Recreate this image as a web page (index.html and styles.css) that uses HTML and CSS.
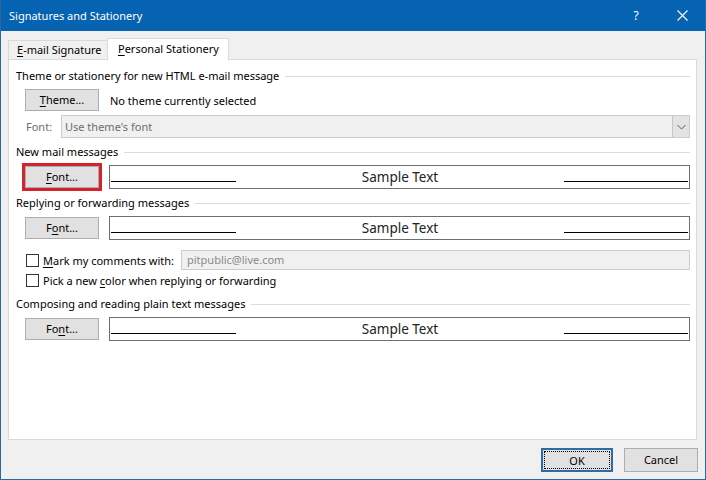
FILE: index.html
```html
<!DOCTYPE html>
<html>
<head>
<meta charset="utf-8">
<title>Signatures and Stationery</title>
<link rel="stylesheet" href="styles.css">
</head>
<body>
<div class="window">
  <div class="titlebar">
    <span class="title">Signatures and Stationery</span>
    <span class="tb-btn">?</span>
    <span class="tb-btn">
      <svg width="11" height="11" viewBox="0 0 11 11"><path d="M0.5 0.5 L10.5 10.5 M10.5 0.5 L0.5 10.5" stroke="#fff" stroke-width="1.1" fill="none"/></svg>
    </span>
  </div>
  <div class="client">
    <div class="tabs">
      <div class="tab"><span class="tab-text"><u>E</u>-mail Signature</span></div>
      <div class="tab active"><span class="tab-text"><u>P</u>ersonal Stationery</span></div>
    </div>
    <div class="panel">
      <div class="group-label"><span>Theme or stationery for new HTML e-mail message</span></div>
      <div class="row theme-row">
        <span class="btn"><span><u>T</u>heme...</span></span>
        <span class="note">No theme currently selected</span>
      </div>
      <div class="row font-row">
        <span class="dis-label">Font:</span>
        <div class="combo">
          <span class="combo-text">Use theme's font</span>
          <span class="combo-btn"><svg width="9" height="6" viewBox="0 0 9 6"><path d="M0.5 1 L4.5 5 L8.5 1" stroke="#5a5a5a" stroke-width="1" fill="none"/></svg></span>
        </div>
      </div>

      <div class="group-label g2"><span>New mail messages</span></div>
      <div class="row sample-row">
        <span class="btn highlighted"><span><u>F</u>ont...</span></span>
        <div class="sample"><span class="sline"></span><span class="stext">Sample Text</span><span class="sline right"></span></div>
      </div>

      <div class="group-label g3"><span>Replying or forwarding messages</span></div>
      <div class="row sample-row">
        <span class="btn"><span>F<u>o</u>nt...</span></span>
        <div class="sample"><span class="sline"></span><span class="stext">Sample Text</span><span class="sline right"></span></div>
      </div>

      <div class="row check-row first">
        <span class="check"></span>
        <span class="check-label"><u>M</u>ark my comments with:</span>
        <div class="textbox">pitpublic@live.com</div>
      </div>
      <div class="row check-row second">
        <span class="check"></span>
        <span class="check-label">Pick a new <u>c</u>olor when replying or forwarding</span>
      </div>

      <div class="group-label g4"><span>Composing and reading plain text messages</span></div>
      <div class="row sample-row">
        <span class="btn"><span>Fo<u>n</u>t...</span></span>
        <div class="sample"><span class="sline"></span><span class="stext">Sample Text</span><span class="sline right"></span></div>
      </div>
    </div>
    <div class="footer">
      <span class="btn ok"><span class="focus">OK</span></span>
      <span class="btn cancel">Cancel</span>
    </div>
  </div>
</div>
</body>
</html>
```

FILE: styles.css
```css
* { box-sizing: border-box; }
html, body { margin: 0; padding: 0; }
body {
  width: 706px;
  height: 480px;
  font-family: "Noto Sans", sans-serif;
  font-size: 11px;
  color: #000;
  background: #f0f0f0;
  overflow: hidden;
}
u { text-decoration: underline; text-underline-offset: 2px; text-decoration-thickness: 1px; }

.window {
  width: 706px;
  height: 480px;
  border: 1px solid #2a6aa0;
  border-top: none;
  background: #f0f0f0;
  display: flex;
  flex-direction: column;
}

.titlebar {
  height: 31px;
  flex: none;
  background: #0563b1;
  color: #fff;
  display: flex;
  align-items: center;
  padding-left: 8px;
  font-size: 11px;
}
.title { flex: 1; padding-bottom: 1px; }
.tb-btn {
  width: 46px;
  height: 31px;
  display: flex;
  align-items: center;
  justify-content: center;
  font-size: 12px;
}

.client {
  flex: 1;
  display: flex;
  flex-direction: column;
  padding: 7px 7px 0 7px;
}

.tabs {
  display: flex;
  align-items: flex-end;
  height: 21px;
}
.tab {
  width: 100px;
  height: 19px;
  padding-left: 8px;
  border: 1px solid #d9d9d9;
  border-bottom: none;
  background: #f0f0f0;
  line-height: 17px;
  white-space: nowrap;
}
.tab.active {
  position: relative;
  z-index: 1;
  width: 122px;
  height: 22px;
  margin-left: -1px;
  margin-bottom: -1px;
  background: #fff;
  padding-left: 10px;
  line-height: 19px;
}

.panel {
  width: 689px;
  height: 381px;
  background: #fff;
  border: 1px solid #d9d9d9;
  padding: 8px 6px 0 7px;
  display: flex;
  flex-direction: column;
}

.group-label {
  display: flex;
  align-items: center;
  height: 16px;
  line-height: 16px;
  white-space: nowrap;
}
.group-label::after {
  content: "";
  flex: 1;
  border-top: 1px solid #dcdcdc;
  margin-left: 6px;
  margin-top: 1px;
}
.g2 { margin-top: 6px; }
.g3 { margin-top: 6px; }
.g4 { margin-top: 8px; }

.row { display: flex; align-items: center; padding-left: 9px; white-space: nowrap; }

.btn {
  width: 74px;
  height: 22px;
  background: #e1e1e1;
  border: 1px solid #adadad;
  display: inline-flex;
  align-items: center;
  justify-content: center;
  flex: none;
  padding-bottom: 1px;
}
.highlighted { outline: 3px solid #d3232c; }

.theme-row { margin-top: 5px; height: 22px; }
.note { margin-left: 11px; }

.font-row { margin-top: 4px; height: 23px; padding-left: 10px; }
.dis-label { color: #6d6d6d; width: 35px; }
.combo {
  flex: 1;
  height: 23px;
  border: 1px solid #cccccc;
  background: #f0f0f0;
  display: flex;
  align-items: center;
}
.combo-text { flex: 1; padding-left: 3px; color: #6d6d6d; }
.combo-btn {
  width: 17px;
  height: 21px;
  background: #e3e3e3;
  border-left: 1px solid #c6c6c6;
  display: flex;
  align-items: center;
  justify-content: center;
}

.sample-row { margin-top: 5px; height: 24px; }
.sample {
  flex: 1;
  height: 24px;
  margin-left: 10px;
  border: 1px solid #6e6e6e;
  display: flex;
  align-items: center;
  padding: 0 1px;
}
.sline {
  width: 125px;
  align-self: flex-end;
  margin-bottom: 6px;
  border-bottom: 1px solid #000;
}
.sline.right { width: 124px; }
.stext {
  flex: 1;
  text-align: center;
  font-size: 13.5px;
  color: #222;
  padding-bottom: 1px;
}

.check-row { padding-left: 10px; }
.check-row.first { margin-top: 10px; height: 20px; }
.check-row.second { margin-top: 2px; height: 16px; }
.check {
  width: 13px;
  height: 13px;
  border: 1px solid #333;
  background: #fff;
  flex: none;
}
.check-label { margin-left: 4px; }
.textbox {
  width: 509px;
  margin-left: auto;
  height: 20px;
  border: 1px solid #cccccc;
  background: #f0f0f0;
  color: #8a8a8a;
  padding-left: 5px;
  display: flex;
  align-items: center;
  padding-bottom: 1px;
}

.footer {
  display: flex;
  justify-content: flex-end;
  margin-top: 8px;
  gap: 11px;
}
.footer .btn { height: 24px; }
.ok {
  width: 72px;
  border: 2px solid #2c6ca3;
  padding: 1px;
}
.ok .focus {
  width: 100%;
  height: 100%;
  border: 1px dotted #000;
  display: flex;
  align-items: center;
  justify-content: center;
}
.cancel { width: 74px; }
```
